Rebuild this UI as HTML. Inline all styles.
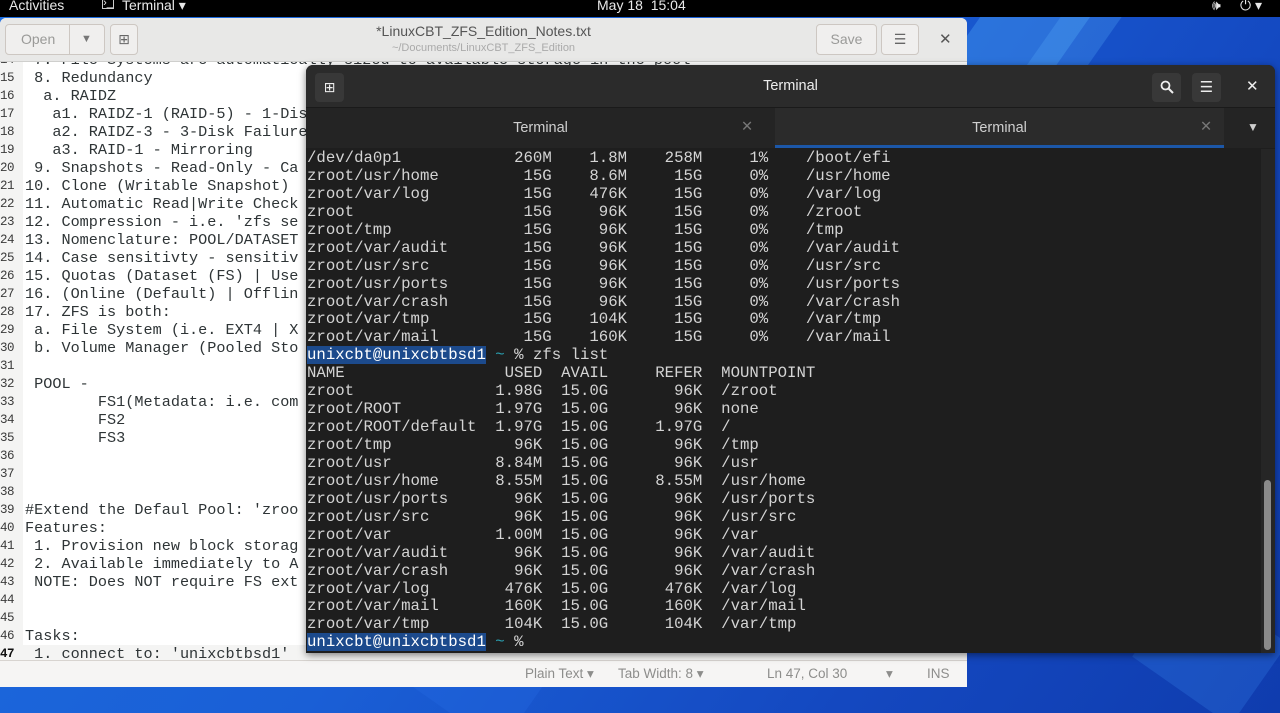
<!DOCTYPE html>
<html><head><meta charset="utf-8"><style>
*{margin:0;padding:0;box-sizing:border-box}
html{width:1280px;height:713px;overflow:hidden}
body{width:1280px;height:713px;overflow:hidden;position:relative;font-family:"Liberation Sans","DejaVu Sans",sans-serif;
background:linear-gradient(125deg,#1d6ee0 0%,#1a5fd6 45%,#1448c0 75%,#0f3cae 100%)}
#bg{position:absolute;left:0;top:0;width:1280px;height:713px;overflow:hidden}
.stripe{position:absolute;transform:rotate(35deg);background:rgba(80,170,245,.35)}
#top{position:absolute;left:0;top:0;width:1280px;height:17px;background:#000;color:#e8e8e8;font-size:14px;overflow:hidden}
#top span{position:absolute;top:-3px}
#gedit{position:absolute;left:0;top:18px;width:967px;height:669px;background:#fff;border-radius:6px 6px 0 0;overflow:hidden}
#ghead{position:absolute;left:0;top:0;width:967px;height:44px;background:#e8e8e7;border-bottom:1px solid #cfcfcd}
.gbtn{position:absolute;top:6px;height:31px;border:1px solid #cdc7c2;border-radius:4px;background:#f0efee;color:#9a9a98;font-size:14px;text-align:center;line-height:29px}
#gtext{position:absolute;left:0;top:44px;width:967px;height:598px;overflow:hidden;background:#fff}
#gutter{position:absolute;left:0;top:0;width:23px;height:598px;background:#f4f4f3}
.gl{position:absolute;left:0;height:18px;width:967px;font-family:"Liberation Mono",monospace;font-size:15.2px;line-height:18px;color:#2e3436;white-space:pre}
.gl .n{position:absolute;left:0;width:22px;font-size:12.5px;letter-spacing:-0.5px;color:#3a3a3a}
.gl .t{position:absolute;left:25px}
#gstat{position:absolute;left:0;top:642px;width:967px;height:27px;background:#f6f5f4;border-top:1px solid #d8d4d0;color:#8d8d8b;font-size:13.5px}
#gstat span{position:absolute;top:5px}
#term{position:absolute;left:306px;top:65px;width:969px;height:588px;background:#1e1e1e;border-radius:7px 7px 0 0;overflow:hidden;box-shadow:0 2px 8px rgba(0,0,0,.5)}
#thead{position:absolute;left:0;top:0;width:969px;height:43px;background:#2b2b2b;border-bottom:1px solid #1a1a1a;color:#eee;font-size:14.5px}
.tb{position:absolute;top:8px;width:29px;height:29px;background:#383838;border-radius:4px;color:#eee;text-align:center;line-height:29px;font-size:15px}
#tabs{position:absolute;left:0;top:43px;width:969px;height:40px;background:#242424;color:#cfcfcf;font-size:14.5px}
#tout{position:absolute;left:1px;top:85px;font-family:"Liberation Mono",monospace;font-size:15.7px;line-height:17.95px;color:#d4d4d4;white-space:nowrap}
#tout div{height:17.95px}
#tout span{white-space:pre}
.a{display:inline-block;width:22ch}.b{display:inline-block;width:4ch;text-align:right}.c{display:inline-block;width:8ch;text-align:right}.e{display:inline-block;width:7ch;text-align:right}.f{padding-left:4ch}
.nm{display:inline-block;width:20ch}.u{display:inline-block;width:5ch;text-align:right}.v{display:inline-block;width:7ch;text-align:right}.r{display:inline-block;width:10ch;text-align:right}.m{padding-left:2ch}
.p{background:#1c4a8c;color:#fff}.tl{color:#2a9fb0}
</style></head><body>
<div id="bg">
<div class="stripe" style="left:960px;top:-40px;width:90px;height:200px"></div>
<div class="stripe" style="left:1050px;top:-60px;width:50px;height:200px;background:rgba(90,180,250,.25)"></div>
<div class="stripe" style="left:1150px;top:600px;width:120px;height:100px;background:rgba(60,140,240,.25)"></div>
<div class="stripe" style="left:380px;top:620px;width:160px;height:90px;background:rgba(40,110,230,.3)"></div>
</div>

<div id="top">
<span style="left:9px">Activities</span>
<span style="left:102px;top:-2px;font-size:11px;border:1px solid #ccc;width:12px;height:11px;line-height:8px;text-align:center">›_</span>
<span style="left:122px">Terminal ▾</span>
<span style="left:597px">May 18&nbsp; 15:04</span>
<span style="left:1212px">🕪</span>
<span style="left:1240px">⏻ ▾</span>
</div>

<div id="gedit">
<div id="ghead">
<div class="gbtn" style="left:5px;width:100px;text-align:left"><span style="padding-left:15px">Open</span><span style="position:absolute;left:63px;top:0;height:29px;border-left:1px solid #cdc7c2"></span><span style="position:absolute;left:75px;font-size:11px;color:#777">▼</span></div>
<div class="gbtn" style="left:110px;width:28px;color:#666">⊞</div>
<div style="position:absolute;left:0;width:967px;top:5px;text-align:center;font-size:14px;color:#555">*LinuxCBT_ZFS_Edition_Notes.txt</div>
<div style="position:absolute;left:0;width:967px;top:24px;text-align:center;font-size:11px;color:#aaa">~/Documents/LinuxCBT_ZFS_Edition</div>
<div class="gbtn" style="left:816px;width:61px">Save</div>
<div class="gbtn" style="left:881px;width:38px;color:#666">☰</div>
<div style="position:absolute;left:939px;top:12px;font-size:15px;color:#555">✕</div>
</div>
<div id="gtext">
<div id="gutter"></div>
<div class="gl" style="top:-11px"><span class="n">14</span><span class="t"> 7. File Systems are automatically sized to available storage in the pool</span></div>
<div class="gl" style="top:7px"><span class="n">15</span><span class="t"> 8. Redundancy</span></div>
<div class="gl" style="top:25px"><span class="n">16</span><span class="t">  a. RAIDZ</span></div>
<div class="gl" style="top:43px"><span class="n">17</span><span class="t">   a1. RAIDZ-1 (RAID-5) - 1-Disk</span></div>
<div class="gl" style="top:61px"><span class="n">18</span><span class="t">   a2. RAIDZ-3 - 3-Disk Failure</span></div>
<div class="gl" style="top:79px"><span class="n">19</span><span class="t">   a3. RAID-1 - Mirroring</span></div>
<div class="gl" style="top:97px"><span class="n">20</span><span class="t"> 9. Snapshots - Read-Only - Ca</span></div>
<div class="gl" style="top:115px"><span class="n">21</span><span class="t">10. Clone (Writable Snapshot) </span></div>
<div class="gl" style="top:133px"><span class="n">22</span><span class="t">11. Automatic Read|Write Check</span></div>
<div class="gl" style="top:151px"><span class="n">23</span><span class="t">12. Compression - i.e. 'zfs se</span></div>
<div class="gl" style="top:169px"><span class="n">24</span><span class="t">13. Nomenclature: POOL/DATASET</span></div>
<div class="gl" style="top:187px"><span class="n">25</span><span class="t">14. Case sensitivty - sensitiv</span></div>
<div class="gl" style="top:205px"><span class="n">26</span><span class="t">15. Quotas (Dataset (FS) | Use</span></div>
<div class="gl" style="top:223px"><span class="n">27</span><span class="t">16. (Online (Default) | Offlin</span></div>
<div class="gl" style="top:241px"><span class="n">28</span><span class="t">17. ZFS is both:</span></div>
<div class="gl" style="top:259px"><span class="n">29</span><span class="t"> a. File System (i.e. EXT4 | X</span></div>
<div class="gl" style="top:277px"><span class="n">30</span><span class="t"> b. Volume Manager (Pooled Sto</span></div>
<div class="gl" style="top:295px"><span class="n">31</span></div>
<div class="gl" style="top:313px"><span class="n">32</span><span class="t"> POOL -</span></div>
<div class="gl" style="top:331px"><span class="n">33</span><span class="t">        FS1(Metadata: i.e. com</span></div>
<div class="gl" style="top:349px"><span class="n">34</span><span class="t">        FS2</span></div>
<div class="gl" style="top:367px"><span class="n">35</span><span class="t">        FS3</span></div>
<div class="gl" style="top:385px"><span class="n">36</span></div>
<div class="gl" style="top:403px"><span class="n">37</span></div>
<div class="gl" style="top:421px"><span class="n">38</span></div>
<div class="gl" style="top:439px"><span class="n">39</span><span class="t">#Extend the Defaul Pool: 'zroo</span></div>
<div class="gl" style="top:457px"><span class="n">40</span><span class="t">Features:</span></div>
<div class="gl" style="top:475px"><span class="n">41</span><span class="t"> 1. Provision new block storag</span></div>
<div class="gl" style="top:493px"><span class="n">42</span><span class="t"> 2. Available immediately to A</span></div>
<div class="gl" style="top:511px"><span class="n">43</span><span class="t"> NOTE: Does NOT require FS ext</span></div>
<div class="gl" style="top:529px"><span class="n">44</span></div>
<div class="gl" style="top:547px"><span class="n">45</span></div>
<div class="gl" style="top:565px"><span class="n">46</span><span class="t">Tasks:</span></div>
<div class="gl" style="top:583px;background:#f4f4f3"><span class="n" style="font-weight:bold;color:#111">47</span><span class="t"> 1. connect to: 'unixcbtbsd1'</span></div>
</div>
<div id="gstat">
<span style="left:525px">Plain Text ▾</span>
<span style="left:618px">Tab Width: 8 ▾</span>
<span style="left:767px">Ln 47, Col 30</span>
<span style="left:886px">▾</span>
<span style="left:927px">INS</span>
</div>
</div>

<div id="term">
<div id="thead">
<div class="tb" style="left:9px;font-size:14px">⊞</div>
<div style="position:absolute;left:0;width:969px;top:13px;text-align:center">Terminal</div>
<div class="tb" style="left:846px">
<svg width="14" height="14" viewBox="0 0 14 14" style="margin-top:7px"><circle cx="5.5" cy="5.5" r="4" fill="none" stroke="#eee" stroke-width="1.8"/><path d="M8.5 8.5L13 13" stroke="#eee" stroke-width="2"/></svg></div>
<div class="tb" style="left:886px">☰</div>
<div style="position:absolute;left:940px;top:12px;font-size:15px">✕</div>
</div>
<div id="tabs">
<div style="position:absolute;left:0;width:469px;top:12px;text-align:center">Terminal</div>
<div style="position:absolute;left:435px;top:11px;color:#777">✕</div>
<div style="position:absolute;left:469px;top:0;width:449px;height:40px;background:#2b2b2b;border-bottom:3px solid #1c57a8"></div>
<div style="position:absolute;left:469px;width:449px;top:12px;text-align:center">Terminal</div>
<div style="position:absolute;left:894px;top:11px;color:#777">✕</div>
<div style="position:absolute;left:941px;top:12px;font-size:12px">▼</div>
</div>
<div style="position:absolute;left:955px;top:84px;width:14px;height:504px;background:#262626"></div>
<div style="position:absolute;left:958px;top:415px;width:7px;height:170px;background:#8a8a8a;border-radius:4px"></div>
<div id="tout"><div><span class="a">/dev/da0p1</span><span class="b">260M</span><span class="c">1.8M</span><span class="c">258M</span><span class="e">1%</span><span class="f">/boot/efi</span></div><div><span class="a">zroot/usr/home</span><span class="b">15G</span><span class="c">8.6M</span><span class="c">15G</span><span class="e">0%</span><span class="f">/usr/home</span></div><div><span class="a">zroot/var/log</span><span class="b">15G</span><span class="c">476K</span><span class="c">15G</span><span class="e">0%</span><span class="f">/var/log</span></div><div><span class="a">zroot</span><span class="b">15G</span><span class="c">96K</span><span class="c">15G</span><span class="e">0%</span><span class="f">/zroot</span></div><div><span class="a">zroot/tmp</span><span class="b">15G</span><span class="c">96K</span><span class="c">15G</span><span class="e">0%</span><span class="f">/tmp</span></div><div><span class="a">zroot/var/audit</span><span class="b">15G</span><span class="c">96K</span><span class="c">15G</span><span class="e">0%</span><span class="f">/var/audit</span></div><div><span class="a">zroot/usr/src</span><span class="b">15G</span><span class="c">96K</span><span class="c">15G</span><span class="e">0%</span><span class="f">/usr/src</span></div><div><span class="a">zroot/usr/ports</span><span class="b">15G</span><span class="c">96K</span><span class="c">15G</span><span class="e">0%</span><span class="f">/usr/ports</span></div><div><span class="a">zroot/var/crash</span><span class="b">15G</span><span class="c">96K</span><span class="c">15G</span><span class="e">0%</span><span class="f">/var/crash</span></div><div><span class="a">zroot/var/tmp</span><span class="b">15G</span><span class="c">104K</span><span class="c">15G</span><span class="e">0%</span><span class="f">/var/tmp</span></div><div><span class="a">zroot/var/mail</span><span class="b">15G</span><span class="c">160K</span><span class="c">15G</span><span class="e">0%</span><span class="f">/var/mail</span></div><div><span class="p">unixcbt@unixcbtbsd1</span><span> </span><span class="tl">~</span><span> % zfs list</span></div><div><span class="nm">NAME</span><span class="u">USED</span><span class="v">AVAIL</span><span class="r">REFER</span><span class="m">MOUNTPOINT</span></div><div><span class="nm">zroot</span><span class="u">1.98G</span><span class="v">15.0G</span><span class="r">96K</span><span class="m">/zroot</span></div><div><span class="nm">zroot/ROOT</span><span class="u">1.97G</span><span class="v">15.0G</span><span class="r">96K</span><span class="m">none</span></div><div><span class="nm">zroot/ROOT/default</span><span class="u">1.97G</span><span class="v">15.0G</span><span class="r">1.97G</span><span class="m">/</span></div><div><span class="nm">zroot/tmp</span><span class="u">96K</span><span class="v">15.0G</span><span class="r">96K</span><span class="m">/tmp</span></div><div><span class="nm">zroot/usr</span><span class="u">8.84M</span><span class="v">15.0G</span><span class="r">96K</span><span class="m">/usr</span></div><div><span class="nm">zroot/usr/home</span><span class="u">8.55M</span><span class="v">15.0G</span><span class="r">8.55M</span><span class="m">/usr/home</span></div><div><span class="nm">zroot/usr/ports</span><span class="u">96K</span><span class="v">15.0G</span><span class="r">96K</span><span class="m">/usr/ports</span></div><div><span class="nm">zroot/usr/src</span><span class="u">96K</span><span class="v">15.0G</span><span class="r">96K</span><span class="m">/usr/src</span></div><div><span class="nm">zroot/var</span><span class="u">1.00M</span><span class="v">15.0G</span><span class="r">96K</span><span class="m">/var</span></div><div><span class="nm">zroot/var/audit</span><span class="u">96K</span><span class="v">15.0G</span><span class="r">96K</span><span class="m">/var/audit</span></div><div><span class="nm">zroot/var/crash</span><span class="u">96K</span><span class="v">15.0G</span><span class="r">96K</span><span class="m">/var/crash</span></div><div><span class="nm">zroot/var/log</span><span class="u">476K</span><span class="v">15.0G</span><span class="r">476K</span><span class="m">/var/log</span></div><div><span class="nm">zroot/var/mail</span><span class="u">160K</span><span class="v">15.0G</span><span class="r">160K</span><span class="m">/var/mail</span></div><div><span class="nm">zroot/var/tmp</span><span class="u">104K</span><span class="v">15.0G</span><span class="r">104K</span><span class="m">/var/tmp</span></div><div><span class="p">unixcbt@unixcbtbsd1</span><span> </span><span class="tl">~</span><span> %</span></div></div>
</div>
</body></html>
